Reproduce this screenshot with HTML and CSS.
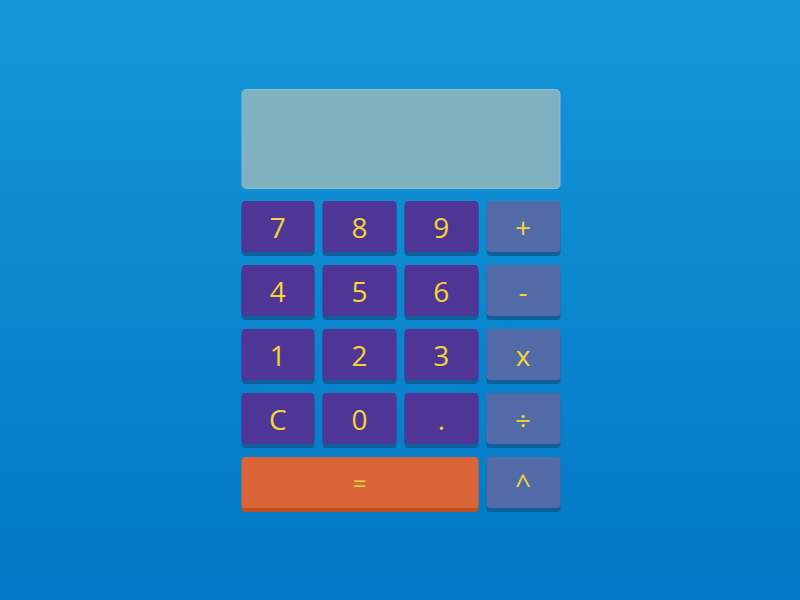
FILE: index.html
```html
<!DOCTYPE html>
<html lang="en">
<head>
<meta charset="utf-8">
<title>Calculator</title>
<link rel="stylesheet" href="styles.css">
</head>
<body>
<main class="calc">
  <div class="display"></div>
  <div class="keys">
    <button class="key num">7</button>
    <button class="key num">8</button>
    <button class="key num">9</button>
    <button class="key op">+</button>
    <button class="key num">4</button>
    <button class="key num">5</button>
    <button class="key num">6</button>
    <button class="key op">-</button>
    <button class="key num">1</button>
    <button class="key num">2</button>
    <button class="key num">3</button>
    <button class="key op">x</button>
    <button class="key num">C</button>
    <button class="key num">0</button>
    <button class="key num">.</button>
    <button class="key op">÷</button>
    <button class="key eq">=</button>
    <button class="key op">^</button>
  </div>
</main>
</body>
</html>
```

FILE: styles.css
```css
html, body {
  margin: 0;
  height: 100%;
}

body {
  background: linear-gradient(180deg, #1497d9 0%, #0277c3 100%);
  font-family: "Open Sans", "Noto Sans", sans-serif;
}

.calc {
  width: 319px;
  margin: 0 auto;
  padding-top: 89px;
  transform: translateX(0.5px);
}

.display {
  height: 100px;
  background: #80b1c1;
  border: 1px solid #8fbccb;
  box-sizing: border-box;
  border-radius: 5px;
  margin-bottom: 12px;
}

.keys {
  display: grid;
  grid-template-columns: repeat(4, 1fr);
  grid-auto-rows: 51px;
  column-gap: 8px;
  row-gap: 13px;
}

.key {
  border: none;
  border-radius: 4px;
  padding: 0;
  color: #f6d33a;
  font-family: inherit;
  font-size: 28px;
  font-weight: 400;
  line-height: 1;
}

.num {
  background: #4f3595;
  box-shadow: 0 4px 0 #0f5f9e;
}

.op {
  background: #526ba7;
  box-shadow: 0 4px 0 #0c5e9c;
}

.eq {
  grid-column: span 3;
  background: #d96538;
  box-shadow: 0 4px 0 #c24f1e;
  font-size: 24px;
}
```
